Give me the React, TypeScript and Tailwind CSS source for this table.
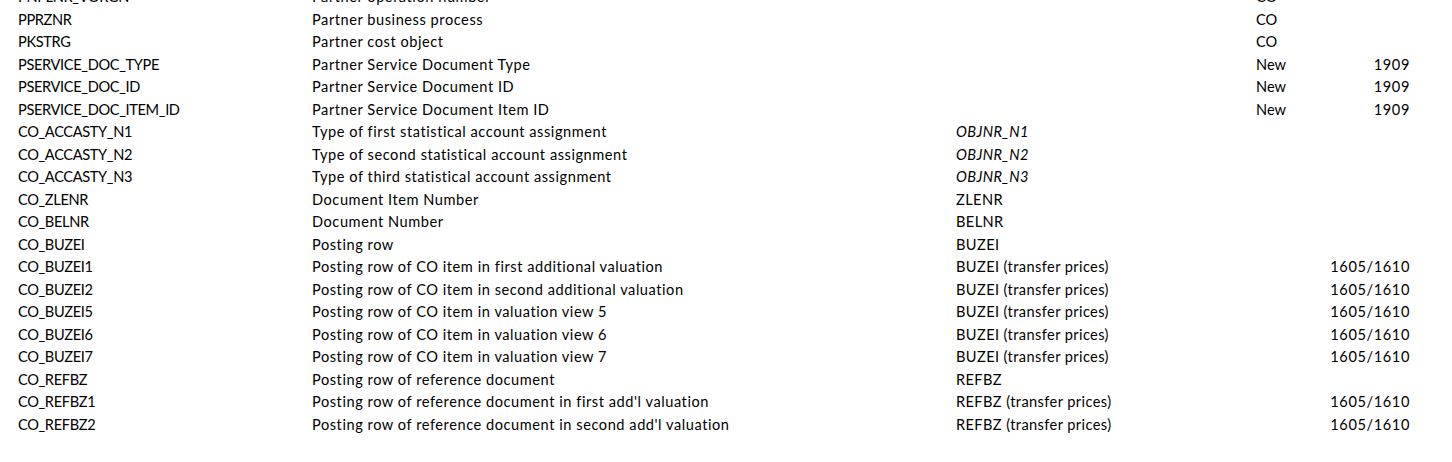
import React from "react";

type Row = { a: string; b: string; c?: string; ci?: boolean; d?: string; e?: string };

const rows: Row[] = [
  { a: "PNPLNR_VORGN", b: "Partner operation number", d: "CO" },
  { a: "PPRZNR", b: "Partner business process", d: "CO" },
  { a: "PKSTRG", b: "Partner cost object", d: "CO" },
  { a: "PSERVICE_DOC_TYPE", b: "Partner Service Document Type", d: "New", e: "1909" },
  { a: "PSERVICE_DOC_ID", b: "Partner Service Document ID", d: "New", e: "1909" },
  { a: "PSERVICE_DOC_ITEM_ID", b: "Partner Service Document Item ID", d: "New", e: "1909" },
  { a: "CO_ACCASTY_N1", b: "Type of first statistical account assignment", c: "OBJNR_N1", ci: true },
  { a: "CO_ACCASTY_N2", b: "Type of second statistical account assignment", c: "OBJNR_N2", ci: true },
  { a: "CO_ACCASTY_N3", b: "Type of third statistical account assignment", c: "OBJNR_N3", ci: true },
  { a: "CO_ZLENR", b: "Document Item Number", c: "ZLENR" },
  { a: "CO_BELNR", b: "Document Number", c: "BELNR" },
  { a: "CO_BUZEI", b: "Posting row", c: "BUZEI" },
  { a: "CO_BUZEI1", b: "Posting row of CO item in first additional valuation", c: "BUZEI (transfer prices)", e: "1605/1610" },
  { a: "CO_BUZEI2", b: "Posting row of CO item in second additional valuation", c: "BUZEI (transfer prices)", e: "1605/1610" },
  { a: "CO_BUZEI5", b: "Posting row of CO item in valuation view 5", c: "BUZEI (transfer prices)", e: "1605/1610" },
  { a: "CO_BUZEI6", b: "Posting row of CO item in valuation view 6", c: "BUZEI (transfer prices)", e: "1605/1610" },
  { a: "CO_BUZEI7", b: "Posting row of CO item in valuation view 7", c: "BUZEI (transfer prices)", e: "1605/1610" },
  { a: "CO_REFBZ", b: "Posting row of reference document", c: "REFBZ" },
  { a: "CO_REFBZ1", b: "Posting row of reference document in first add'l valuation", c: "REFBZ (transfer prices)", e: "1605/1610" },
  { a: "CO_REFBZ2", b: "Posting row of reference document in second add'l valuation", c: "REFBZ (transfer prices)", e: "1605/1610" },
];

export default function App() {
  return (
    <div className="w-[1452px] h-[462px] overflow-hidden bg-white text-black font-['Lato',sans-serif] text-[14.6px]">
      <div className="mt-[-13.75px] flex flex-col">
        {rows.map((r, i) => (
          <div key={i} className="h-[22.5px] flex items-center whitespace-nowrap leading-none">
            <div className="w-[312px] pl-[18px] shrink-0 tracking-[-0.35px]">{r.a}</div>
            <div className="w-[644px] shrink-0 tracking-[0.55px]">{r.b}</div>
            <div className={"w-[300px] shrink-0 tracking-[0.4px]" + (r.ci ? " italic" : "")}>{r.c ?? ""}</div>
            <div className="w-[50px] shrink-0">{r.d ?? ""}</div>
            <div className="w-[104px] shrink-0 text-right tracking-[0.6px] -mr-[0.6px]">{r.e ?? ""}</div>
          </div>
        ))}
      </div>
    </div>
  );
}
